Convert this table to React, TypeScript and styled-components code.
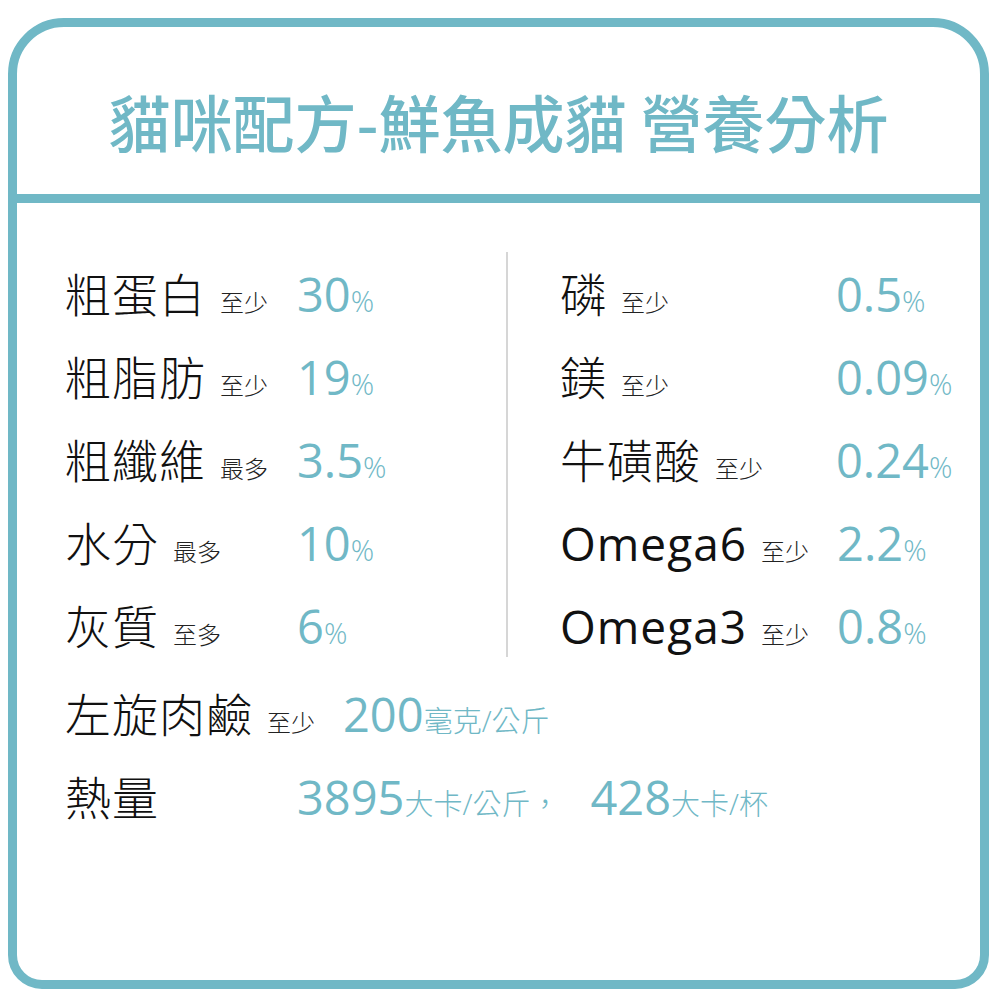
import styled, { createGlobalStyle } from 'styled-components';

const TEAL = '#70b8c6';

const GlobalStyle = createGlobalStyle`
  body {
    margin: 0;
    background: #ffffff;
  }
`;

type Item = { label: string; qual: string; num: string; unit?: string };

const left: Item[] = [
  { label: '粗蛋白', qual: '至少', num: '30', unit: '%' },
  { label: '粗脂肪', qual: '至少', num: '19', unit: '%' },
  { label: '粗纖維', qual: '最多', num: '3.5', unit: '%' },
  { label: '水分', qual: '最多', num: '10', unit: '%' },
  { label: '灰質', qual: '至多', num: '6', unit: '%' },
];

const right: Item[] = [
  { label: '磷', qual: '至少', num: '0.5', unit: '%' },
  { label: '鎂', qual: '至少', num: '0.09', unit: '%' },
  { label: '牛磺酸', qual: '至少', num: '0.24', unit: '%' },
  { label: 'Omega6', qual: '至少', num: '2.2', unit: '%' },
  { label: 'Omega3', qual: '至少', num: '0.8', unit: '%' },
];

function NutrientRow({ item, width }: { item: Item; width: number }) {
  const latin = /^[A-Za-z]/.test(item.label);
  return (
    <Row>
      <LabelCell $w={width}>
        <Label $latin={latin}>{item.label}</Label>
        <Qualifier>{item.qual}</Qualifier>
      </LabelCell>
      <Value>
        <Num>{item.num}</Num>
        <Unit>{item.unit}</Unit>
      </Value>
    </Row>
  );
}

export default function App() {
  return (
    <Page>
      <GlobalStyle />
      <Card>
        <Header>
          <Title>貓咪配方-鮮魚成貓 營養分析</Title>
        </Header>
        <Body>
          <Columns>
            <Column>
              {left.map((it) => (
                <NutrientRow key={it.label} item={it} width={232} />
              ))}
            </Column>
            <Divider />
            <RightColumn>
              {right.map((it) => (
                <NutrientRow key={it.label} item={it} width={276} />
              ))}
            </RightColumn>
          </Columns>
          <Extra>
            <Row>
              <LabelCell $w={232}>
                <Label>左旋肉鹼</Label>
                <Qualifier>至少</Qualifier>
              </LabelCell>
              <Value>
                <Num>200</Num>
                <Unit>毫克/公斤</Unit>
              </Value>
            </Row>
            <Row>
              <LabelCell $w={232}>
                <Label>熱量</Label>
              </LabelCell>
              <Value>
                <Num>3895</Num>
                <Unit>大卡/公斤</Unit>
                <Sep>，</Sep>
                <Num>428</Num>
                <Unit>大卡/杯</Unit>
              </Value>
            </Row>
          </Extra>
        </Body>
      </Card>
    </Page>
  );
}

const Page = styled.div`
  padding: 18px 11px 11px 8px;
`;

const Card = styled.div`
  width: 981px;
  height: 971px;
  box-sizing: border-box;
  border: 9px solid ${TEAL};
  border-radius: 56px 56px 34px 34px;
  display: flex;
  flex-direction: column;
  overflow: hidden;
`;

const Header = styled.div`
  height: 176px;
  box-sizing: border-box;
  border-bottom: 9px solid ${TEAL};
  display: flex;
  align-items: center;
  justify-content: center;
  padding-top: 20px;
`;

const Title = styled.h1`
  margin: 0;
  font-family: 'Noto Sans CJK TC', 'Noto Sans', sans-serif;
  font-size: 62px;
  font-weight: 500;
  line-height: 1;
  color: ${TEAL};
  white-space: nowrap;
`;

const Body = styled.div`
  padding: 68px 0 0 48px;
`;

const Columns = styled.div`
  display: grid;
  grid-template-columns: 441px 2px 1fr;
`;

const Column = styled.div`
  display: flex;
  flex-direction: column;
`;

const RightColumn = styled(Column)`
  padding-left: 52px;
`;

const Divider = styled.div`
  width: 2px;
  height: 405px;
  margin-top: -19px;
  background: #d6d6d6;
`;

const Extra = styled.div`
  display: flex;
  flex-direction: column;
  margin-top: 5px;
`;

const Row = styled.div`
  display: flex;
  align-items: baseline;
  height: 83px;
`;

const LabelCell = styled.div<{ $w: number }>`
  display: flex;
  align-items: baseline;
  gap: 14px;
  min-width: ${(p) => p.$w}px;
  padding-right: 28px;
  box-sizing: border-box;
  flex-shrink: 0;
`;

const Label = styled.span<{ $latin?: boolean }>`
  font-family: 'Open Sans', 'Noto Sans CJK TC', sans-serif;
  font-size: 46px;
  font-weight: ${(p) => (p.$latin ? 400 : 300)};
  letter-spacing: 1px;
  line-height: 1;
  color: #111111;
  white-space: nowrap;
`;

const Qualifier = styled.span`
  font-family: 'Noto Sans CJK TC', sans-serif;
  font-size: 24px;
  font-weight: 300;
  line-height: 1;
  color: #222222;
  white-space: nowrap;
`;

const Value = styled.div`
  display: flex;
  align-items: baseline;
  color: ${TEAL};
  white-space: nowrap;
`;

const Num = styled.span`
  font-family: 'Open Sans', sans-serif;
  font-size: 47px;
  font-weight: 400;
  line-height: 1;
`;

const Unit = styled.span`
  font-family: 'Open Sans', 'Noto Sans CJK TC', sans-serif;
  font-size: 29px;
  font-weight: 300;
  line-height: 1;
`;

const Sep = styled.span`
  font-family: 'Noto Sans CJK TC', sans-serif;
  font-size: 29px;
  font-weight: 300;
  line-height: 1;
  margin-right: 31px;
`;
